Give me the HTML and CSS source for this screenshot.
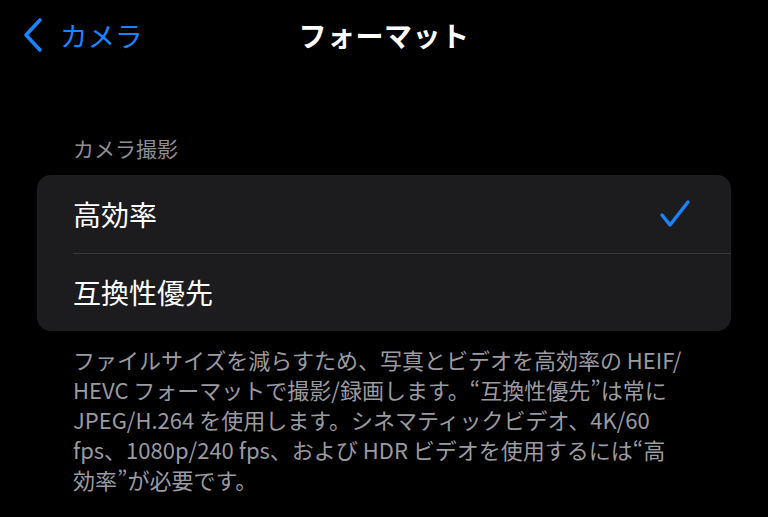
FILE: index.html
```html
<!DOCTYPE html>
<html lang="ja">
<head>
<meta charset="utf-8">
<link rel="stylesheet" href="styles.css">
</head>
<body>
<div class="nav">
  <div class="back">
    <svg class="chev" width="22" height="36" viewBox="0 0 22 36"><path d="M18 3 L4 18 L18 33" fill="none" stroke="#1a84ff" stroke-width="3.6" stroke-linecap="round" stroke-linejoin="round"/></svg>
    <span class="back-label">カメラ</span>
  </div>
  <div class="title">フォーマット</div>
  <div></div>
</div>
<div class="content">
  <div class="section-header">カメラ撮影</div>
  <div class="card">
    <div class="row">
      <span class="row-label">高効率</span>
      <svg class="check" width="32" height="30" viewBox="0 0 32 30"><path d="M3 16 L11 26 L29 3" fill="none" stroke="#1a84ff" stroke-width="3.4" stroke-linecap="round" stroke-linejoin="round"/></svg>
    </div>
    <div class="row row-sep">
      <span class="row-label">互換性優先</span>
    </div>
  </div>
  <div class="footer">
    <div class="line">ファイルサイズを減らすため、写真とビデオを高効率の HEIF/</div>
    <div class="line">HEVC フォーマットで撮影/録画します。“互換性優先”は常に</div>
    <div class="line">JPEG/H.264 を使用します。シネマティックビデオ、4K/60</div>
    <div class="line">fps、1080p/240 fps、および HDR ビデオを使用するには“高</div>
    <div class="line">効率”が必要です。</div>
  </div>
</div>
</body>
</html>
```
FILE: styles.css
```css
* { box-sizing: border-box; }
html, body {
  margin: 0;
  padding: 0;
  background: #000;
  font-family: "Noto Sans CJK JP", "Noto Sans", "Liberation Sans", sans-serif;
  color: #fff;
  width: 768px;
  height: 517px;
  overflow: hidden;
}
.nav {
  display: grid;
  grid-template-columns: 1fr auto 1fr;
  align-items: center;
  height: 70px;
}
.back {
  display: flex;
  align-items: center;
  padding-left: 22px;
  gap: 16px;
}
.chev { display: block; }
.back-label {
  color: #1a84ff;
  font-size: 27.5px;
  line-height: 36px;
}
.title {
  font-size: 28px;
  font-weight: 700;
  line-height: 36px;
  letter-spacing: 0.5px;
}
.content {
  padding: 0 37px;
}
.section-header {
  margin-top: 64px;
  padding-left: 36px;
  color: #8e8e93;
  font-size: 21px;
  line-height: 28px;
}
.card {
  margin-top: 13px;
  background: #1c1c1e;
  border-radius: 14px;
  overflow: hidden;
}
.row {
  height: 78px;
  display: flex;
  align-items: center;
  justify-content: space-between;
  padding-left: 36px;
  padding-right: 40px;
}
.row-sep {
  position: relative;
}
.row-sep::before {
  content: "";
  position: absolute;
  left: 36px;
  right: 0;
  top: 0;
  height: 1px;
  background: #38383a;
}
.row-label {
  font-size: 28px;
  line-height: 36px;
  color: #fff;
}
.check { display: block; }
.footer {
  margin-top: 13px;
  padding-left: 36px;
  color: #9a9aa0;
  font-size: 22px;
  line-height: 30px;
}
.line { white-space: nowrap; }
```
